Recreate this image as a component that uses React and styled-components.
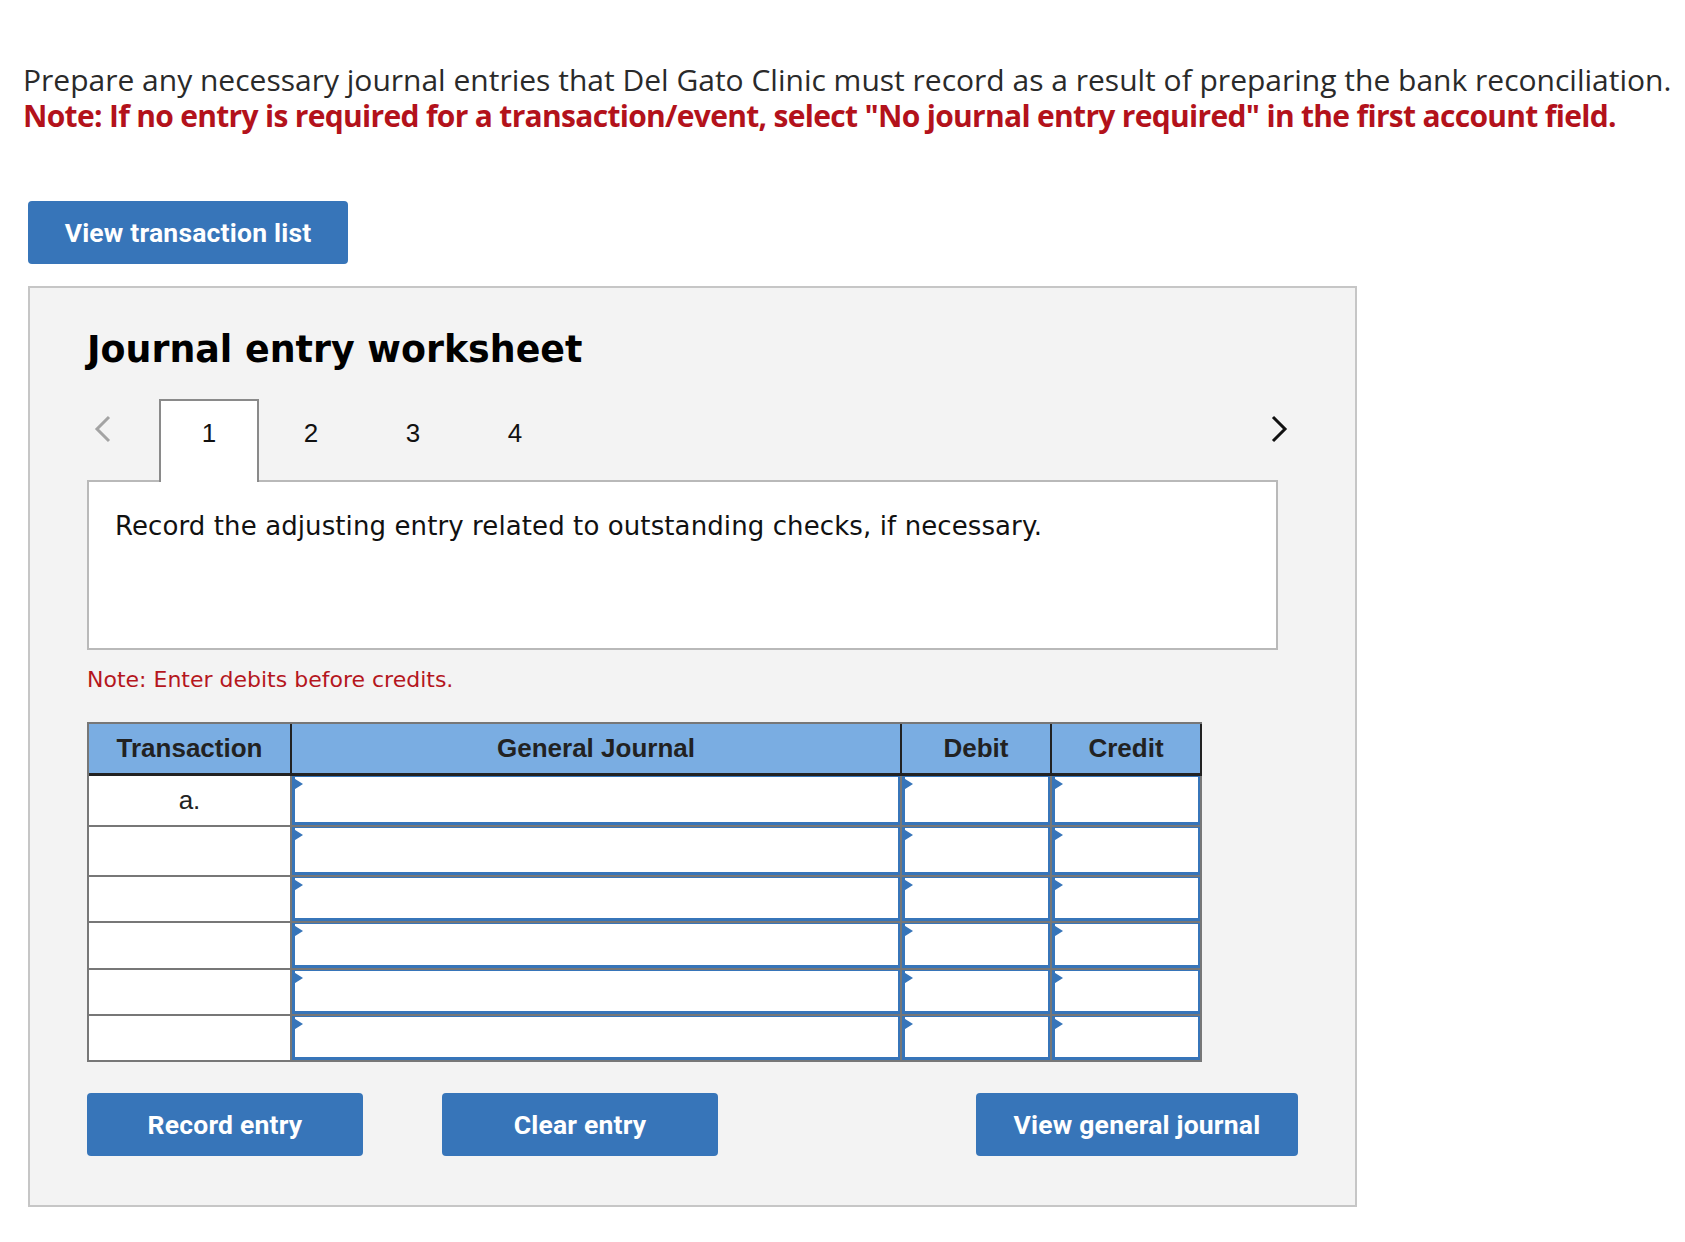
import React from 'react'
import styled, { createGlobalStyle } from 'styled-components'

const GlobalStyle = createGlobalStyle`
    html, body {
        margin:0;
        padding:0;
        background:#ffffff;
    }
    body{
        font-family:"Open Sans", "Liberation Sans", sans-serif;
        color:#2a2a2a;
    }
    *{
        box-sizing:border-box;
    }
`;

const BLUE = '#3775b9';
const ROWS = ['a.', '', '', '', '', ''];

function Chevron({ dir, color }) {
    const points = dir === 'left' ? '15,2 3,14 15,26' : '2,2 14,14 2,26';
    return (
        <svg width="17" height="28" viewBox="0 0 17 28">
            <polyline points={points} fill="none" stroke={color} strokeWidth="3" />
        </svg>
    )
}

function App() {
    return (
        <Page>
            <GlobalStyle />
            <Intro>
                <Lead>Prepare any necessary journal entries that Del Gato Clinic must record as a result of preparing the bank reconciliation.</Lead>
                <Warn>Note: If no entry is required for a transaction/event, select "No journal entry required" in the first account field.</Warn>
            </Intro>

            <BlueButton $w={320} $ml={28}>View transaction list</BlueButton>

            <Panel>
                <Title>Journal entry worksheet</Title>

                <TabBar>
                    <PrevArrow><Chevron dir="left" color="#a3a3a3" /></PrevArrow>
                    {[1, 2, 3, 4].map(n => (
                        <Tab key={n} $active={n === 1}>{n}</Tab>
                    ))}
                    <NextArrow><Chevron dir="right" color="#111111" /></NextArrow>
                </TabBar>

                <Prompt>Record the adjusting entry related to outstanding checks, if necessary.</Prompt>

                <Note>Note: Enter debits before credits.</Note>

                <Journal>
                    <Head>Transaction</Head>
                    <Head>General Journal</Head>
                    <Head>Debit</Head>
                    <Head>Credit</Head>
                    {ROWS.map((label, i) => (
                        <React.Fragment key={i}>
                            <Cell>{label}</Cell>
                            <Cell><Field><Flag /></Field></Cell>
                            <Cell><Field><Flag /></Field></Cell>
                            <Cell><Field><Flag /></Field></Cell>
                        </React.Fragment>
                    ))}
                </Journal>

                <Actions>
                    <BlueButton $w={276}>Record entry</BlueButton>
                    <BlueButton $w={276}>Clear entry</BlueButton>
                    <BlueButton $w={322} $push>View general journal</BlueButton>
                </Actions>
            </Panel>
        </Page>
    )
}

const Page = styled.div`
    width:1685px;
    min-height:1242px;
    padding-top:62px;
`;

const Intro = styled.div`
    margin-left:23px;
    font-size:30px;
    line-height:36px;
    white-space:nowrap;
`;

const Lead = styled.p`
    margin:0;
    color:#2a2a2a;
`;

const Warn = styled.p`
    margin:0;
    font-weight:bold;
    color:#b3121b;
    letter-spacing:-0.69px;
`;

const BlueButton = styled.button`
    display:flex;
    align-items:center;
    justify-content:center;
    width:${p => p.$w}px;
    height:63px;
    margin:0;
    margin-left:${p => p.$push ? 'auto' : (p.$ml || 0) + 'px'};
    padding:0;
    border:none;
    border-radius:4px;
    background:${BLUE};
    color:#ffffff;
    font-family:Roboto, "Liberation Sans", sans-serif;
    font-weight:bold;
    font-size:26.5px;
    letter-spacing:0.2px;
    cursor:pointer;
    ${Intro} + &{
        margin-top:67px;
    }
`;

const Panel = styled.section`
    width:1329px;
    margin:22px 0 0 28px;
    padding:43px 0 49px 57px;
    border:2px solid #c6c6c6;
    background:#f3f3f3;
`;

const Title = styled.h2`
    margin:0;
    font-family:"DejaVu Sans", Verdana, sans-serif;
    font-weight:bold;
    font-size:36.4px;
    line-height:37px;
    color:#000000;
`;

const TabBar = styled.div`
    display:flex;
    width:1201px;
    height:81px;
    margin-top:31px;
`;

const PrevArrow = styled.div`
    width:72px;
    padding:16px 0 0 7px;
`;

const NextArrow = styled.div`
    margin-left:auto;
    padding-top:16px;
`;

const Tab = styled.div`
    position:relative;
    z-index:1;
    width:100px;
    height:83px;
    margin-right:2px;
    padding-top:18px;
    border:2px solid ${p => p.$active ? '#8a8a8a' : 'transparent'};
    border-bottom:none;
    background:${p => p.$active ? '#ffffff' : 'transparent'};
    text-align:center;
    font-family:"Liberation Sans", Arial, sans-serif;
    font-size:26px;
    line-height:29px;
    color:#111111;
`;

const Prompt = styled.div`
    width:1191px;
    height:170px;
    padding:29px 26px;
    border:2px solid #b9b9b9;
    background:#ffffff;
    font-family:"DejaVu Sans", Verdana, sans-serif;
    font-size:26px;
    line-height:30px;
    letter-spacing:0.1px;
    color:#111111;
`;

const Note = styled.p`
    margin:16px 0 0;
    font-family:"DejaVu Sans", Verdana, sans-serif;
    font-size:22px;
    line-height:27px;
    color:#b5161d;
`;

const Journal = styled.div`
    display:grid;
    grid-template-columns:203px 610px 150px 150px;
    grid-template-rows:52px 51px 50px 46px 47px 46px 46px;
    width:1115px;
    margin-top:29px;
    border-top:2px solid #777777;
    border-left:2px solid #777777;
    font-family:"Liberation Sans", Arial, sans-serif;
    font-size:26px;
    color:#222222;
`;

const Head = styled.div`
    display:flex;
    align-items:center;
    justify-content:center;
    border-right:2px solid #222222;
    border-bottom:3px solid #222222;
    background:#7aade2;
    font-weight:bold;
`;

const Cell = styled.div`
    display:flex;
    align-items:center;
    justify-content:center;
    border-right:2px solid #777777;
    border-bottom:2px solid #777777;
    background:#ffffff;
`;

const Field = styled.div`
    position:relative;
    width:100%;
    height:100%;
    border:2px solid ${BLUE};
    border-top-width:1px;
    border-left-width:3px;
    border-bottom-width:3px;
    background:#ffffff;
`;

const Flag = styled.span`
    position:absolute;
    top:0;
    left:-3px;
    display:block;
    width:0;
    height:0;
    border-top:7px solid transparent;
    border-bottom:7px solid transparent;
    border-left:11px solid ${BLUE};
`;

const Actions = styled.div`
    display:flex;
    gap:79px;
    width:1211px;
    margin-top:31px;
`;

export default App
